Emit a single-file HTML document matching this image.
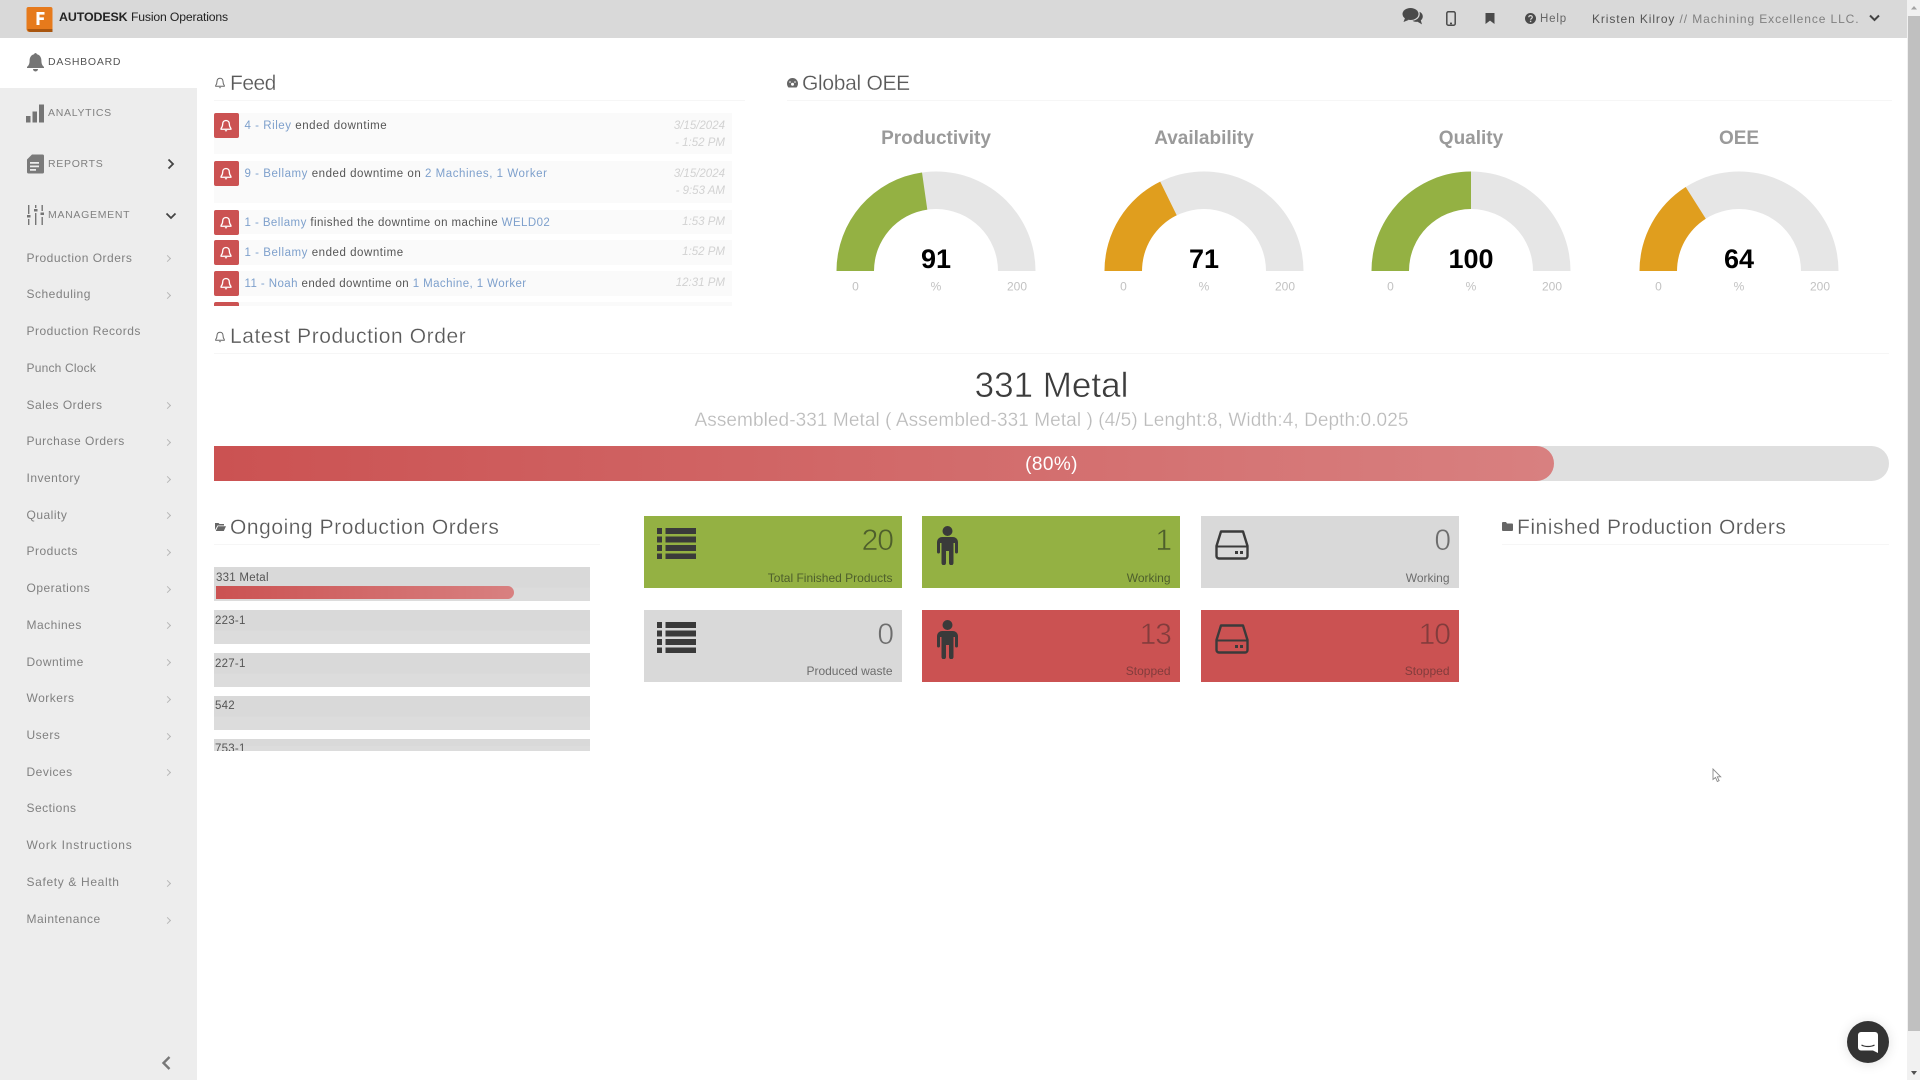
<!DOCTYPE html>
<html lang="en"><head><meta charset="utf-8"><title>Dashboard</title>
<style>
*{box-sizing:border-box}
html,body{margin:0;padding:0;width:1920px;height:1080px;overflow:hidden;background:#fff;font-family:"Liberation Sans",sans-serif;color:#555}
.a{position:absolute;white-space:nowrap}
#top{position:absolute;left:0;top:0;width:1907px;height:38px;background:#d9d9d9}
#side{position:absolute;left:0;top:88px;width:197px;height:992px;background:#ededed}
.m{position:absolute;left:26.5px;font-size:12px;letter-spacing:.5px;color:#808080;line-height:16px;white-space:nowrap}
.t{position:absolute;left:48px;font-size:10.5px;letter-spacing:.7px;color:#808080;line-height:16px;white-space:nowrap}
.ch{position:absolute;left:165px;width:5px;height:5px;border-top:1.3px solid #b8b8b8;border-right:1.3px solid #b8b8b8;transform:rotate(45deg)}
h2{position:absolute;margin:0;font-weight:400;color:#595959;white-space:nowrap;line-height:28px;font-size:21px;-webkit-text-stroke:.25px #fff}
.hr{position:absolute;height:1px;background:#f6f6f6}
.row{position:absolute;left:214px;width:518px;background:#fafafa}
.ic{position:absolute;left:0;top:0;width:25px;height:25px;background:#cb5252;border-radius:2px}
.ic svg{position:absolute;left:5.7px;top:5.5px}
.tx{position:absolute;left:30.5px;top:5px;font-size:11.5px;letter-spacing:.54px;color:#555;line-height:16px;white-space:nowrap}
.tx b{font-weight:400;color:#7ea0cc}
.dt{position:absolute;right:7px;font-size:11.5px;font-style:italic;color:#d2d2d2;line-height:16px;white-space:nowrap}
.card{position:absolute;width:258px;height:72px}
.g{background:#94b143}.y{background:#d9d9d9}.r{background:#cb5252}
.num{position:absolute;right:9px;top:9px;font-size:30px;line-height:32px;letter-spacing:-1px}
.lbl{position:absolute;right:9.5px;top:53.5px;font-size:12px;line-height:16px;letter-spacing:0;white-space:nowrap}
.g .num,.g .lbl{color:#4e5f2c}.y .num,.y .lbl{color:#6d6d6d}.r .num,.r .lbl{color:#823c3c}
.g .num{-webkit-text-stroke:.6px #94b143}.y .num{-webkit-text-stroke:.6px #d9d9d9}.r .num{-webkit-text-stroke:.6px #cb5252}
.card svg{position:absolute}
.po{position:absolute;left:214px;width:376px;height:34px;background:linear-gradient(#d9d9d9 60%,#dcdcdc 60%)}
.po span{position:absolute;left:2px;top:3px;font-size:11.5px;line-height:16px;color:#555;letter-spacing:.25px}
</style></head><body>

<div id="top"></div>
<svg class="a" style="left:24px;top:6px" width="30" height="27" viewBox="0 0 29 27"><path d="M4 1h22a2 2 0 0 1 2 2v23H5a3 3 0 0 1-3-3V3a2 2 0 0 1 2-2z" fill="#e67a1c"/><path d="M3 23h25v3H6a3 3 0 0 1-3-3z" fill="#a9560f"/><path d="M12 6h8v2.6h-5v2.8h4.4V14H15v5h-3z" fill="#fff"/></svg>
<div class="a" style="left:59px;top:9px;font-size:12.4px;line-height:17px;color:#222"><b style="letter-spacing:-.1px">AUTODESK</b> <span style="font-size:12.2px;letter-spacing:-.15px">Fusion Operations</span></div>

<svg class="a" style="left:1402px;top:8px" width="21" height="17" viewBox="0 0 21 17" fill="#4a4a4a"><ellipse cx="8.5" cy="6" rx="8" ry="6"/><path d="M3 10l-1.500 4 5-2z"/><path d="M17.500 3.800c2.200 1.100 3.300 2.800 3.300 4.600 0 1.800-.8 3-2 4l1.200 4-4.500-2.600c-1.600.2-3.600 0-5-1 3.500-.2 8.500-3 7-9z"/></svg>
<svg class="a" style="left:1446px;top:11px" width="10" height="15" viewBox="0 0 10 15"><rect x=".8" y=".8" width="8.400" height="13.400" rx="1.500" fill="none" stroke="#4a4a4a" stroke-width="1.500"/><rect x="4" y="11.600" width="2" height="1.600" fill="#4a4a4a"/></svg>
<svg class="a" style="left:1485px;top:13px" width="10" height="11" viewBox="0 0 10 11"><path d="M.5 0h9v11L5 7.600.5 11z" fill="#4a4a4a"/></svg>
<svg class="a" style="left:1525px;top:13px" width="11" height="11" viewBox="0 0 11 11"><circle cx="5.500" cy="5.500" r="5.500" fill="#4a4a4a"/><path d="M3.800 4.300c0-2.200 3.500-2.200 3.500-.1 0 1.300-1.700 1.300-1.700 2.600" fill="none" stroke="#d9d9d9" stroke-width="1.200"/><rect x="4.900" y="7.700" width="1.400" height="1.400" fill="#d9d9d9"/></svg>
<div class="a" style="left:1540px;top:11px;font-size:11.5px;letter-spacing:.85px;line-height:16px;color:#666">Help</div>
<div class="a" style="left:1592px;top:10.500px;font-size:12px;letter-spacing:.9px;line-height:17px;color:#808080"><span style="color:#555">Kristen Kilroy</span> // Machining Excellence LLC.</div>
<svg class="a" style="left:1869px;top:14px" width="11" height="8" viewBox="0 0 11 8"><path d="M1 1.500l4.500 4.500L10 1.500" fill="none" stroke="#444" stroke-width="2"/></svg>

<div class="a" style="left:1907px;top:0;width:13px;height:1080px;background:#f1f1f1"></div>
<div class="a" style="left:1908px;top:16px;width:12px;height:1015px;background:#c0c0c0"></div>
<svg class="a" style="left:1910px;top:5px" width="8" height="6"><path d="M4 1l3 3.500H1z" fill="#a3a3a3"/></svg>
<svg class="a" style="left:1910px;top:1070px" width="8" height="6"><path d="M1 1h6L4 5z" fill="#505050"/></svg>

<div id="side"></div>
<svg class="a" style="left:27px;top:53px" width="17" height="19" viewBox="0 0 17 19" fill="#757575"><path d="M8.500 0a2 2 0 0 1 1.500 1.200c3 .8 4.400 3.300 4.400 6.300 0 3.500 1 5 2.600 6.500v1H0v-1c1.600-1.500 2.600-3 2.600-6.500 0-3 1.400-5.500 4.400-6.300A2 2 0 0 1 8.500 0z"/><path d="M6 16h5a2.500 2.500 0 0 1-5 0z"/></svg>
<div class="t" style="top:54px;color:#555;letter-spacing:.75px">DASHBOARD</div>
<svg class="a" style="left:26px;top:104px" width="18" height="19" fill="#757575"><rect y="12" width="4.500" height="6.500"/><rect x="6.500" y="7.500" width="4.500" height="11"/><rect x="13" y="0.500" width="5" height="18"/></svg>
<div class="t" style="top:105px">ANALYTICS</div>
<svg class="a" style="left:27px;top:154px" width="17" height="20" viewBox="0 0 17 20"><path d="M5 .500h10.500a1.500 1.500 0 0 1 1.500 1.500v16a1.500 1.500 0 0 1-1.500 1.500h-14A1.500 1.500 0 0 1 0 18V5.500z" fill="#7a7a7a"/><path d="M3 8h9v1.800H3zM3 11.500h9v1.800H3zM3 15h6v1.800H3z" fill="#ededed"/></svg>
<div class="t" style="top:156px">REPORTS</div>
<svg class="a" style="left:167px;top:158px" width="8" height="12" viewBox="0 0 8 12"><path d="M1.500 1.500L6 6l-4.500 4.500" fill="none" stroke="#444" stroke-width="1.800"/></svg>
<svg class="a" style="left:27px;top:205px" width="17" height="20" viewBox="0 0 17 20" fill="#757575"><rect x="1" y="0" width="1.400" height="9"/><rect x="0" y="10" width="3.500" height="2.500"/><rect x="1" y="14" width="1.400" height="6"/><rect x="8" y="0" width="1.400" height="3"/><rect x="7" y="4" width="3.500" height="2.500"/><rect x="8" y="8" width="1.400" height="12"/><rect x="14.500" y="0" width="1.400" height="6"/><rect x="13.500" y="7.500" width="3.500" height="2.500"/><rect x="14.500" y="12" width="1.400" height="8"/></svg>
<div class="t" style="top:207px">MANAGEMENT</div>
<svg class="a" style="left:165px;top:212px" width="12" height="8" viewBox="0 0 12 8"><path d="M1.500 1.500L6 6l4.500-4.500" fill="none" stroke="#444" stroke-width="1.800"/></svg>

<div class="m" style="top:250px">Production Orders</div><i class="ch" style="top:256px"></i>
<div class="m" style="top:286px">Scheduling</div><i class="ch" style="top:293px"></i>
<div class="m" style="top:323px">Production Records</div>
<div class="m" style="top:360px;letter-spacing:.2px">Punch Clock</div>
<div class="m" style="top:397px">Sales Orders</div><i class="ch" style="top:403px"></i>
<div class="m" style="top:433px">Purchase Orders</div><i class="ch" style="top:440px"></i>
<div class="m" style="top:470px">Inventory</div><i class="ch" style="top:477px"></i>
<div class="m" style="top:507px">Quality</div><i class="ch" style="top:513px"></i>
<div class="m" style="top:543px">Products</div><i class="ch" style="top:550px"></i>
<div class="m" style="top:580px">Operations</div><i class="ch" style="top:587px"></i>
<div class="m" style="top:617px">Machines</div><i class="ch" style="top:623px"></i>
<div class="m" style="top:654px">Downtime</div><i class="ch" style="top:660px"></i>
<div class="m" style="top:690px">Workers</div><i class="ch" style="top:697px"></i>
<div class="m" style="top:727px">Users</div><i class="ch" style="top:734px"></i>
<div class="m" style="top:764px">Devices</div><i class="ch" style="top:770px"></i>
<div class="m" style="top:800px">Sections</div>
<div class="m" style="top:837px;letter-spacing:.8px">Work Instructions</div>
<div class="m" style="top:874px;letter-spacing:.65px">Safety &amp; Health</div><i class="ch" style="top:881px"></i>
<div class="m" style="top:911px">Maintenance</div><i class="ch" style="top:918px"></i>
<svg class="a" style="left:160px;top:1055px" width="12" height="16" viewBox="0 0 12 16"><path d="M9.500 2L3.500 8l6 6" fill="none" stroke="#777" stroke-width="2.400"/></svg>

<!-- Feed -->
<svg class="a" style="left:215px;top:77px" width="10" height="12" viewBox="0 0 10 12"><path d="M5 1.200c2 0 3 1.500 3 3.300 0 2 .5 3 1.300 4v.7H.7v-.7C1.500 7.500 2 6.500 2 4.500c0-1.800 1-3.300 3-3.300z" fill="none" stroke="#666" stroke-width="1"/><path d="M3.800 10.200h2.400L5 11.500z" fill="#666"/></svg>
<h2 style="left:230px;top:70px;letter-spacing:-.5px">Feed</h2>
<div class="hr" style="left:214px;top:100px;width:531px"></div>
<div class="row" style="top:113px;height:41px"><div class="ic"><svg width="12" height="14" viewBox="0 0 13 15"><path d="M6.500 1.500c2.500 0 3.600 1.900 3.600 4 0 2.500.7 3.500 1.700 4.500v1H1.200v-1c1-1 1.700-2 1.700-4.500 0-2.100 1.100-4 3.600-4z" fill="none" stroke="#fff" stroke-width="1.400"/><path d="M5 12h3l-1.500 1.800z" fill="#fff"/></svg></div><div class="tx"><b>4 - Riley</b> ended downtime</div><div class="dt" style="top:5px">3/15/2024</div><div class="dt" style="top:22px">- 1:52 PM</div></div>
<div class="row" style="top:161px;height:42px"><div class="ic"><svg width="12" height="14" viewBox="0 0 13 15"><path d="M6.500 1.500c2.500 0 3.600 1.900 3.600 4 0 2.500.7 3.500 1.700 4.500v1H1.200v-1c1-1 1.700-2 1.700-4.500 0-2.100 1.100-4 3.600-4z" fill="none" stroke="#fff" stroke-width="1.400"/><path d="M5 12h3l-1.500 1.800z" fill="#fff"/></svg></div><div class="tx"><b>9 - Bellamy</b> ended downtime on <b>2 Machines, 1 Worker</b></div><div class="dt" style="top:5px">3/15/2024</div><div class="dt" style="top:22px">- 9:53 AM</div></div>
<div class="row" style="top:210px;height:24px"><div class="ic"><svg width="12" height="14" viewBox="0 0 13 15"><path d="M6.500 1.500c2.500 0 3.600 1.900 3.600 4 0 2.500.7 3.500 1.700 4.500v1H1.200v-1c1-1 1.700-2 1.700-4.500 0-2.100 1.100-4 3.600-4z" fill="none" stroke="#fff" stroke-width="1.400"/><path d="M5 12h3l-1.500 1.800z" fill="#fff"/></svg></div><div class="tx" style="top:4.500px;letter-spacing:.43px"><b>1 - Bellamy</b> finished the downtime on machine <b>WELD02</b></div><div class="dt" style="top:4px">1:53 PM</div></div>
<div class="row" style="top:240px;height:25px"><div class="ic"><svg width="12" height="14" viewBox="0 0 13 15"><path d="M6.500 1.500c2.500 0 3.600 1.900 3.600 4 0 2.500.7 3.500 1.700 4.500v1H1.200v-1c1-1 1.700-2 1.700-4.500 0-2.100 1.100-4 3.600-4z" fill="none" stroke="#fff" stroke-width="1.400"/><path d="M5 12h3l-1.500 1.800z" fill="#fff"/></svg></div><div class="tx"><b>1 - Bellamy</b> ended downtime</div><div class="dt" style="top:4px">1:52 PM</div></div>
<div class="row" style="top:271px;height:25px"><div class="ic"><svg width="12" height="14" viewBox="0 0 13 15"><path d="M6.500 1.500c2.500 0 3.600 1.900 3.600 4 0 2.500.7 3.500 1.700 4.500v1H1.200v-1c1-1 1.700-2 1.700-4.500 0-2.100 1.100-4 3.600-4z" fill="none" stroke="#fff" stroke-width="1.400"/><path d="M5 12h3l-1.500 1.800z" fill="#fff"/></svg></div><div class="tx" style="letter-spacing:.42px"><b>11 - Noah</b> ended downtime on <b>1 Machine, 1 Worker</b></div><div class="dt" style="top:4px">12:31 PM</div></div>
<div class="row" style="top:302px;height:4px;overflow:hidden"><div class="ic"></div></div>

<!-- OEE -->
<svg class="a" style="left:787px;top:78px" width="11" height="10" viewBox="0 0 11 10"><path d="M5.500 0a5.500 5.500 0 0 1 5.500 5.500c0 1.700-.6 3-1.500 4h-8c-.9-1-1.500-2.300-1.500-4A5.500 5.500 0 0 1 5.500 0z" fill="#666"/><circle cx="5.500" cy="6.300" r="1.500" fill="#fff"/><circle cx="3" cy="4" r=".8" fill="#fff"/><circle cx="8" cy="4" r=".8" fill="#fff"/></svg>
<h2 style="left:802px;top:70px;letter-spacing:-.3px">Global OEE</h2>
<div class="hr" style="left:787px;top:100px;width:1105px"></div>

<svg class="a" style="left:800px;top:120px" width="1080" height="180" viewBox="800 120 1080 180" font-family="Liberation Sans, sans-serif" text-anchor="middle">
<g transform="translate(936 271)">
<path d="M-99.500 0A99.500 99.500 0 0 1 99.500 0H62A62 62 0 0 0-62 0z" fill="#e6e6e6"/>
<path d="M-99.500 0A99.500 99.500 0 0 1-14-98.500L-8.700-61.400A62 62 0 0 0-62 0z" fill="#94b143"/>
<text x="0" y="-127" font-size="19" font-weight="700" fill="#9a9a9a">Productivity</text>
<text x="0" y="-3" font-size="27" font-weight="700" fill="#000">91</text>
<text x="-80.500" y="19.500" font-size="12" fill="#c2c2c2">0</text><text x="0" y="19.500" font-size="12" fill="#c2c2c2">%</text><text x="81" y="19.500" font-size="12" fill="#c2c2c2">200</text>
</g>
<g transform="translate(1204 271)">
<path d="M-99.500 0A99.500 99.500 0 0 1 99.500 0H62A62 62 0 0 0-62 0z" fill="#e6e6e6"/>
<path d="M-99.500 0A99.500 99.500 0 0 1-43.800-89.400L-27.300-55.700A62 62 0 0 0-62 0z" fill="#e09e1e"/>
<text x="0" y="-127" font-size="19" font-weight="700" fill="#9a9a9a">Availability</text>
<text x="0" y="-3" font-size="27" font-weight="700" fill="#000">71</text>
<text x="-80.500" y="19.500" font-size="12" fill="#c2c2c2">0</text><text x="0" y="19.500" font-size="12" fill="#c2c2c2">%</text><text x="81" y="19.500" font-size="12" fill="#c2c2c2">200</text>
</g>
<g transform="translate(1471 271)">
<path d="M-99.500 0A99.500 99.500 0 0 1 99.500 0H62A62 62 0 0 0-62 0z" fill="#e6e6e6"/>
<path d="M-99.500 0A99.500 99.500 0 0 1 0-99.500V-62A62 62 0 0 0-62 0z" fill="#94b143"/>
<text x="0" y="-127" font-size="19" font-weight="700" fill="#9a9a9a">Quality</text>
<text x="0" y="-3" font-size="27" font-weight="700" fill="#000">100</text>
<text x="-80.500" y="19.500" font-size="12" fill="#c2c2c2">0</text><text x="0" y="19.500" font-size="12" fill="#c2c2c2">%</text><text x="81" y="19.500" font-size="12" fill="#c2c2c2">200</text>
</g>
<g transform="translate(1739 271)">
<path d="M-99.500 0A99.500 99.500 0 0 1 99.500 0H62A62 62 0 0 0-62 0z" fill="#e6e6e6"/>
<path d="M-99.500 0A99.500 99.500 0 0 1-53.300-84L-33.200-52.300A62 62 0 0 0-62 0z" fill="#e09e1e"/>
<text x="0" y="-127" font-size="19" font-weight="700" fill="#9a9a9a">OEE</text>
<text x="0" y="-3" font-size="27" font-weight="700" fill="#000">64</text>
<text x="-80.500" y="19.500" font-size="12" fill="#c2c2c2">0</text><text x="0" y="19.500" font-size="12" fill="#c2c2c2">%</text><text x="81" y="19.500" font-size="12" fill="#c2c2c2">200</text>
</g>
</svg>

<!-- Latest -->
<svg class="a" style="left:215px;top:331px" width="10" height="12" viewBox="0 0 10 12"><path d="M5 1.200c2 0 3 1.500 3 3.300 0 2 .5 3 1.300 4v.7H.7v-.7C1.500 7.500 2 6.500 2 4.500c0-1.800 1-3.300 3-3.300z" fill="none" stroke="#666" stroke-width="1"/><path d="M3.800 10.200h2.400L5 11.500z" fill="#666"/></svg>
<h2 style="left:230px;top:323px;letter-spacing:.58px">Latest Production Order</h2>
<div class="hr" style="left:214px;top:353px;width:1675px"></div>
<div class="a" style="left:214px;width:1675px;top:364px;text-align:center;font-size:35px;line-height:44px;color:#3c3c3c;-webkit-text-stroke:.5px #fff">331 Metal</div>
<div class="a" style="left:214px;width:1675px;top:409px;text-align:center;font-size:19px;line-height:24px;color:#bcbcbc;letter-spacing:.08px;-webkit-text-stroke:.2px #fff">Assembled-331 Metal ( Assembled-331 Metal ) (4/5) Lenght:8, Width:4, Depth:0.025</div>
<div class="a" style="left:214px;top:446px;width:1675px;height:35px;background:#dfdfdf;border-radius:0 18px 18px 0"></div>
<div class="a" style="left:214px;top:446px;width:1340px;height:35px;background:linear-gradient(90deg,#cb5252,#d88080);border-radius:0 18px 18px 0"></div>
<div class="a" style="left:214px;width:1675px;top:454px;text-align:center;font-size:19px;line-height:21px;color:#fff;letter-spacing:.4px">(80%)</div>

<!-- Ongoing -->
<svg class="a" style="left:215px;top:522px" width="11" height="9" viewBox="0 0 11 9"><path d="M0 1h3.500l1 1H9v1.500H2.500L0 8z" fill="#666"/><path d="M3 4.200h8L8.800 9H.8z" fill="#666"/></svg>
<h2 style="left:230px;top:514px;letter-spacing:.55px">Ongoing Production Orders</h2>
<div class="hr" style="left:214px;top:544px;width:386px"></div>
<div class="po" style="top:566.500px"><span>331 Metal</span></div>
<div class="a" style="left:216px;top:586px;width:298px;height:13px;background:linear-gradient(90deg,#cb5252,#d88080);border-radius:0 6.500px 6.500px 0"></div>
<div class="po" style="top:609.500px"><span style="left:1px">223-1</span></div>
<div class="po" style="top:652.500px"><span style="left:1px">227-1</span></div>
<div class="po" style="top:695.500px"><span style="left:1px;top:2px">542</span></div>
<div class="po" style="top:738.500px;height:12px;overflow:hidden"><span style="left:1px;top:2px">753-1</span></div>

<!-- Cards -->
<div class="card g" style="left:644px;top:516px"><svg style="left:13px;top:12px" width="39" height="31"><g fill="#3a3a3a"><rect width="5" height="6"/><rect x="8.500" width="30.500" height="6"/><rect y="8.500" width="5" height="6"/><rect x="8.500" y="8.500" width="30.500" height="6"/><rect y="17" width="5" height="6"/><rect x="8.500" y="17" width="30.500" height="6"/><rect y="25.500" width="5" height="5.500"/><rect x="8.500" y="25.500" width="30.500" height="5.500"/></g></svg><div class="num">20</div><div class="lbl">Total Finished Products</div></div>
<div class="card g" style="left:922px;top:516px"><svg style="left:13.500px;top:10px" width="23" height="39" viewBox="0 0 23 39"><g fill="#3a3a3a"><circle cx="11.500" cy="5" r="5"/><path d="M6 11h11a5 5 0 0 1 5 5v10a1.500 1.500 0 0 1-3 0V17h-1.500v20a2.250 2.250 0 0 1-4.500 0V25h-3v12a2.250 2.250 0 0 1-4.500 0V17H4v9a1.500 1.500 0 0 1-3 0V16a5 5 0 0 1 5-5z"/></g></svg><div class="num">1</div><div class="lbl">Working</div></div>
<div class="card y" style="left:1201px;top:516px"><svg style="left:13.500px;top:14px" width="34" height="30" viewBox="0 0 34 30"><path d="M6 1.500h22L32.500 16v10a2.500 2.500 0 0 1-2.500 2.500H4A2.500 2.500 0 0 1 1.500 26V16z" fill="none" stroke="#3a3a3a" stroke-width="2.400" stroke-linejoin="round"/><path d="M2 16.500h30" stroke="#3a3a3a" stroke-width="2"/><rect x="20" y="21" width="3" height="3" fill="#3a3a3a"/><rect x="25" y="21" width="3" height="3" fill="#3a3a3a"/></svg><div class="num">0</div><div class="lbl">Working</div></div>
<div class="card y" style="left:644px;top:610px"><svg style="left:13px;top:12px" width="39" height="31"><g fill="#3a3a3a"><rect width="5" height="6"/><rect x="8.500" width="30.500" height="6"/><rect y="8.500" width="5" height="6"/><rect x="8.500" y="8.500" width="30.500" height="6"/><rect y="17" width="5" height="6"/><rect x="8.500" y="17" width="30.500" height="6"/><rect y="25.500" width="5" height="5.500"/><rect x="8.500" y="25.500" width="30.500" height="5.500"/></g></svg><div class="num">0</div><div class="lbl" style="top:52.500px">Produced waste</div></div>
<div class="card r" style="left:922px;top:610px"><svg style="left:13.500px;top:10px" width="23" height="39" viewBox="0 0 23 39"><g fill="#3a3a3a"><circle cx="11.500" cy="5" r="5"/><path d="M6 11h11a5 5 0 0 1 5 5v10a1.500 1.500 0 0 1-3 0V17h-1.500v20a2.250 2.250 0 0 1-4.500 0V25h-3v12a2.250 2.250 0 0 1-4.500 0V17H4v9a1.500 1.500 0 0 1-3 0V16a5 5 0 0 1 5-5z"/></g></svg><div class="num">13</div><div class="lbl" style="top:52.500px">Stopped</div></div>
<div class="card r" style="left:1201px;top:610px"><svg style="left:13.500px;top:14px" width="34" height="30" viewBox="0 0 34 30"><path d="M6 1.500h22L32.500 16v10a2.500 2.500 0 0 1-2.500 2.500H4A2.500 2.500 0 0 1 1.500 26V16z" fill="none" stroke="#3a3a3a" stroke-width="2.400" stroke-linejoin="round"/><path d="M2 16.500h30" stroke="#3a3a3a" stroke-width="2"/><rect x="20" y="21" width="3" height="3" fill="#3a3a3a"/><rect x="25" y="21" width="3" height="3" fill="#3a3a3a"/></svg><div class="num">10</div><div class="lbl" style="top:52.500px">Stopped</div></div>

<!-- Finished -->
<svg class="a" style="left:1502px;top:522px" width="11" height="9" viewBox="0 0 11 9"><path d="M0 1a1 1 0 0 1 1-1h3l1 1.500h5a1 1 0 0 1 1 1V8a1 1 0 0 1-1 1H1a1 1 0 0 1-1-1z" fill="#666"/></svg>
<h2 style="left:1517px;top:514px;letter-spacing:.53px">Finished Production Orders</h2>
<div class="hr" style="left:1502px;top:544px;width:387px"></div>

<!-- Cursor -->
<svg class="a" style="left:1712px;top:768px" width="11" height="15" viewBox="0 0 11 15"><path d="M1 1v10.500l2.500-2 1.800 4 1.800-.8-1.800-3.900h3.400z" fill="#fff" stroke="#8a8a8a" stroke-width=".9"/></svg>

<!-- Chat -->
<div class="a" style="left:1847px;top:1021px;width:42px;height:42px;border-radius:50%;background:#333;box-shadow:0 1px 12px rgba(0,0,0,.12)"></div>
<svg class="a" style="left:1858px;top:1032px" width="20" height="22" viewBox="0 0 20 22"><path d="M3 0h14a3 3 0 0 1 3 3v18l-5-2.500H3a3 3 0 0 1-3-3V3a3 3 0 0 1 3-3z" fill="#fff"/><path d="M3.500 13c3.500 2 9.500 2 13 0" fill="none" stroke="#333" stroke-width="1.200"/></svg>
</body></html>
